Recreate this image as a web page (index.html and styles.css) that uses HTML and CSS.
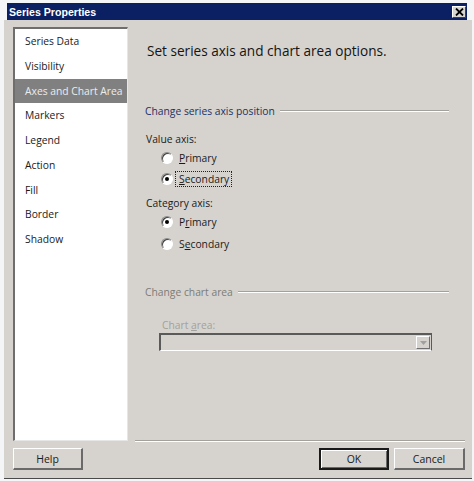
FILE: index.html
```html
<!DOCTYPE html>
<html>
<head>
<meta charset="utf-8">
<link rel="stylesheet" href="styles.css">
</head>
<body>
<div class="screen">
  <div class="titlebar">
    <span class="title">Series Properties</span>
    <span class="close"><svg width="9" height="8" viewBox="0 0 9 8"><path d="M1 0.5 L8 7.5 M8 0.5 L1 7.5" stroke="#000" stroke-width="1.8"/></svg></span>
  </div>
  <div class="dialog">
    <div class="content">
      <ul class="nav">
        <li>Series Data</li>
        <li>Visibility</li>
        <li class="selected">Axes and Chart Area</li>
        <li>Markers</li>
        <li>Legend</li>
        <li>Action</li>
        <li>Fill</li>
        <li>Border</li>
        <li>Shadow</li>
      </ul>
      <div class="main">
        <h1 class="heading">Set series axis and chart area options.</h1>
        <div class="legend legend-blue"><span>Change series axis position</span><i class="rule"></i></div>
        <div class="label">Value axis:</div>
        <div class="radio"><span class="dot"></span><span class="rtext"><u>P</u>rimary</span></div>
        <div class="radio"><span class="dot on"></span><span class="rtext focus"><u>S</u>econdary</span></div>
        <div class="label label-gap">Category axis:</div>
        <div class="radio radio-first"><span class="dot on"></span><span class="rtext">P<u>r</u>imary</span></div>
        <div class="radio"><span class="dot"></span><span class="rtext">S<u>e</u>condary</span></div>
        <div class="legend legend-gray"><span>Change chart area</span><i class="rule"></i></div>
        <div class="label label-disabled">Chart <u>a</u>rea:</div>
        <div class="combo"><span class="drop"><svg width="7" height="4" viewBox="0 0 7 4"><path d="M0 0 H7 L3.5 4 Z" fill="#a0a0a0"/></svg></span></div>
      </div>
    </div>
    <div class="footer">
      <button class="btn">Help</button>
      <span class="spacer"></span>
      <button class="btn btn-default">OK</button>
      <button class="btn">Cancel</button>
    </div>
  </div>
</div>
</body>
</html>
```
FILE: styles.css
```css
html, body {
  margin: 0;
  padding: 0;
  background: #f4f5f7;
}
body {
  font-family: "Open Sans", "Noto Sans", sans-serif;
  font-size: 10.3px;
  color: #1a1a1a;
}
.screen {
  width: 474px;
  height: 481px;
  padding: 3px 0 0 4px;
  box-sizing: border-box;
}
.titlebar {
  margin-left: 3px;
  width: 460px;
  height: 17px;
  background: #0b1f63;
  display: flex;
  align-items: center;
  justify-content: space-between;
  box-sizing: border-box;
  padding: 0 1px 0 2px;
}
.title {
  color: #fff;
  font-family: "Liberation Sans", Arial, sans-serif;
  font-weight: bold;
  font-size: 10.6px;
}
.close {
  width: 14px;
  height: 12px;
  background: #d8d6d2;
  box-sizing: border-box;
  border: 1px solid;
  border-color: #fff #404040 #404040 #fff;
  display: flex;
  align-items: center;
  justify-content: center;
}
.dialog {
  width: 468px;
  height: 458px;
  background: #d6d3ce;
  border-bottom: 1px solid #4a4a4a;
  display: flex;
  flex-direction: column;
}
.content {
  display: flex;
  padding: 7px 7px 0 9px;
  height: 414px;
}
.nav {
  list-style: none;
  margin: 0;
  padding: 0;
  width: 115px;
  height: 414px;
  box-sizing: border-box;
  background: #fff;
  border-style: solid;
  border-width: 2px 1px 1px 2px;
  border-color: #6e6e6e #e6e6e6 #e6e6e6 #6e6e6e;
}
.nav li {
  height: 24.75px;
  line-height: 24.75px;
  padding-left: 10px;
  white-space: nowrap;
}
.nav li.selected {
  background: #808080;
  color: #ececec;
}
.main {
  flex: 1;
  margin-left: 7px;
  padding-left: 10px;
  border-bottom: 1px solid #a3a19d;
  box-shadow: 0 1px 0 #fff;
  display: flex;
  flex-direction: column;
}
.heading {
  margin: 14px 0 0 2px;
  font-size: 13.6px;
  font-weight: normal;
  line-height: 20px;
  color: #141414;
}
.legend {
  display: flex;
  align-items: center;
  height: 16px;
  margin-right: 16px;
}
.legend-blue {
  margin-top: 42px;
  color: #1c3064;
}
.legend-gray {
  margin-top: 30px;
  color: #7c7b78;
}
.rule {
  flex: 1;
  margin-left: 5px;
  height: 0;
  border-top: 1px solid #a3a19d;
  border-bottom: 1px solid #fff;
}
.label {
  margin-top: 12px;
  height: 16px;
  line-height: 16px;
  margin-left: 1px;
}
.label-gap {
  margin-top: 5px;
}
.label-disabled {
  margin-top: 17px;
  margin-left: 17px;
  color: #a3a19d;
}
.radio {
  height: 21.3px;
  display: flex;
  align-items: center;
  margin-left: 16px;
}
.radio-first {
  margin-top: 1px;
}
.dot {
  width: 12px;
  height: 12px;
  box-sizing: border-box;
  border-radius: 50%;
  background: #fff;
  border: 1px solid;
  border-color: #8a8a8a #fff #fff #8a8a8a;
  box-shadow: inset 1px 1px 0 #404040;
  display: flex;
  align-items: center;
  justify-content: center;
}
.dot.on::after {
  content: "";
  width: 4px;
  height: 4px;
  border-radius: 50%;
  background: #000;
}
.rtext {
  margin-left: 6px;
  padding: 0 2px 0 0;
  line-height: 14px;
}
.rtext.focus {
  margin-left: 3px;
  padding: 0 2px 0 3px;
  outline: 1px dotted #222;
}
.combo {
  margin-top: 0;
  margin-left: 14px;
  width: 273px;
  height: 18px;
  box-sizing: border-box;
  border-style: solid;
  border-width: 2px 1px 1px 2px;
  border-color: #5a5a5a #5a5a5a #fff #5a5a5a;
  display: flex;
  justify-content: flex-end;
  padding: 1px 1px 1px 0;
}
.drop {
  width: 14px;
  box-sizing: border-box;
  background: #d6d3ce;
  border-style: solid;
  border-width: 1px;
  border-color: #fff #707070 #707070 #fff;
  display: flex;
  align-items: center;
  justify-content: center;
}
.footer {
  display: flex;
  padding: 7px 7px 0 9px;
  gap: 5px;
}
.spacer {
  flex: 1;
}
.btn {
  width: 70px;
  height: 22px;
  font-family: "Open Sans", "Noto Sans", sans-serif;
  font-size: 10.5px;
  color: #1a1a1a;
  background: #d8d5d0;
  border-style: solid;
  border-width: 1px 2px 2px 1px;
  border-color: #fff #6a6a6a #6a6a6a #fff;
  padding: 0;
}
.btn-default {
  outline: 1px solid #1a1a1a;
  outline-offset: -1px;
  border-width: 2px;
  border-color: #1a1a1a;
  box-shadow: inset 1px 1px 0 #fff, inset -1px -1px 0 #6a6a6a;
}
.footer .btn:last-child {
  width: 71px;
}
u {
  text-decoration: underline;
  text-underline-offset: 1px;
}
```
